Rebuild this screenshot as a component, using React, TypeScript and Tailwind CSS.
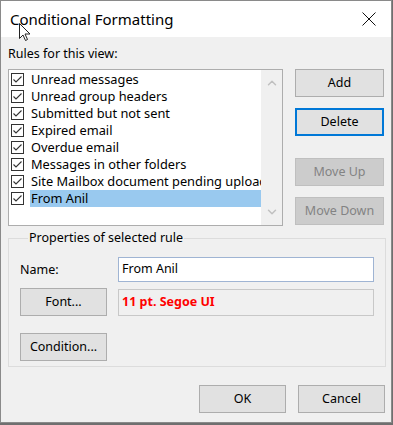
import { ChevronUp, ChevronDown } from "lucide-react";

const rules = [
  "Unread messages",
  "Unread group headers",
  "Submitted but not sent",
  "Expired email",
  "Overdue email",
  "Messages in other folders",
  "Site Mailbox document pending upload",
  "From Anil",
];

const font = { fontFamily: '"Noto Sans", "Open Sans", sans-serif' };

function Check() {
  return (
    <span className="w-[13px] h-[13px] shrink-0 border border-[#333] bg-white flex items-center justify-center">
      <svg width="11" height="11" viewBox="0 0 11 11">
        <polyline points="1.5,5.5 4,8 9.5,2.5" fill="none" stroke="#333" strokeWidth="1.1" />
      </svg>
    </span>
  );
}

function Btn({ label, w = "w-[89px]", kind = "normal" }: { label: string; w?: string; kind?: "normal" | "focus" | "disabled" }) {
  const cls =
    kind === "focus"
      ? "border-2 border-[#0078d7] bg-[#e1e1e1] text-black"
      : kind === "disabled"
      ? "border border-[#bfbfbf] bg-[#cccccc] text-[#838383]"
      : "border border-[#adadad] bg-[#e1e1e1] text-black";
  return (
    <div className={`${w} h-[28px] flex items-center justify-center text-[12.5px] ${cls}`}>{label}</div>
  );
}

export default function App() {
  return (
    <div className="w-[393px] h-[425px] bg-[#6f6f6f] relative" style={font}>
      <div className="w-[392px] h-[423px] border border-[#8a8a8a] bg-[#f0f0f0] flex flex-col">
        <div className="h-[36px] bg-white flex items-center justify-between pl-[9px] pr-[15px]">
          <span className="text-[15px] text-black">Conditional Formatting</span>
          <svg width="14" height="14" viewBox="0 0 14 14">
            <path d="M0.5 0.5 L13.5 13.5 M13.5 0.5 L0.5 13.5" stroke="#111" strokeWidth="1" />
          </svg>
        </div>

        <div className="pl-[7px] pt-[9px] text-[12.5px] leading-[16px] text-black">Rules for this view:</div>

        <div className="flex pl-[7px] mt-[7px]">
          <div className="w-[275px] h-[157px] border border-[#adadad] bg-white flex">
            <div className="flex-1 pt-[1px] pl-[2px] overflow-hidden">
              {rules.map((r, i) => (
                <div key={r} className="h-[17px] flex items-center">
                  <Check />
                  <span
                    className={`ml-[6px] pl-[1px] h-[17px] flex-1 flex items-center whitespace-nowrap overflow-hidden text-[12.8px] ${
                      i === rules.length - 1 ? "bg-[#99c9ef]" : ""
                    }`}
                  >
                    {r}
                  </span>
                </div>
              ))}
            </div>
            <div className="w-[21px] bg-[#f0f0f0] flex flex-col justify-between items-center py-[6px]">
              <ChevronUp size={14} strokeWidth={2.5} color="#c0c0c0" />
              <ChevronDown size={14} strokeWidth={2.5} color="#c0c0c0" />
            </div>
          </div>

          <div className="ml-[12px] flex flex-col">
            <Btn label="Add" />
            <div className="mt-[11px]">
              <Btn label="Delete" kind="focus" />
            </div>
            <div className="mt-[22px]">
              <Btn label="Move Up" kind="disabled" />
            </div>
            <div className="mt-[11px]">
              <Btn label="Move Down" kind="disabled" />
            </div>
          </div>
        </div>

        <fieldset className="ml-[7px] mt-[4px] w-[378px] h-[137px] border border-[#dcdcdc] px-[11px] pt-[11px]">
          <legend className="ml-[8px] px-[1px] text-[12.5px] leading-[16px]">Properties of selected rule</legend>
          <div className="flex items-center">
            <span className="w-[98px] text-[12.5px] pt-[2px]">Name:</span>
            <div className="w-[256px] h-[25px] border border-[#9fb4d3] bg-white flex items-center pl-[3px] text-[12.5px]">
              From Anil
            </div>
          </div>
          <div className="flex items-center mt-[6px]">
            <Btn label="Font..." w="w-[87px]" />
            <div className="ml-[11px] w-[256px] h-[27px] border border-[#c8c8c8] flex items-center pl-[3px] text-[12.5px] font-bold text-[#ff0000]">
              11 pt. Segoe UI
            </div>
          </div>
          <div className="mt-[17px]">
            <Btn label="Condition..." w="w-[87px]" />
          </div>
        </fieldset>

        <div className="flex justify-end pr-[6px] mt-[18px] gap-[12px]">
          <Btn label="OK" w="w-[87px]" />
          <Btn label="Cancel" w="w-[87px]" />
        </div>
      </div>

      <svg className="absolute left-[19px] top-[23px]" width="13" height="19" viewBox="0 0 13 19">
        <path d="M0.5 0.5 L0.5 15.5 L4 12 L6.5 17.5 L8.5 16.5 L6 11 L11 11 Z" fill="white" stroke="#222" strokeWidth="1" strokeLinejoin="round" />
      </svg>
    </div>
  );
}
